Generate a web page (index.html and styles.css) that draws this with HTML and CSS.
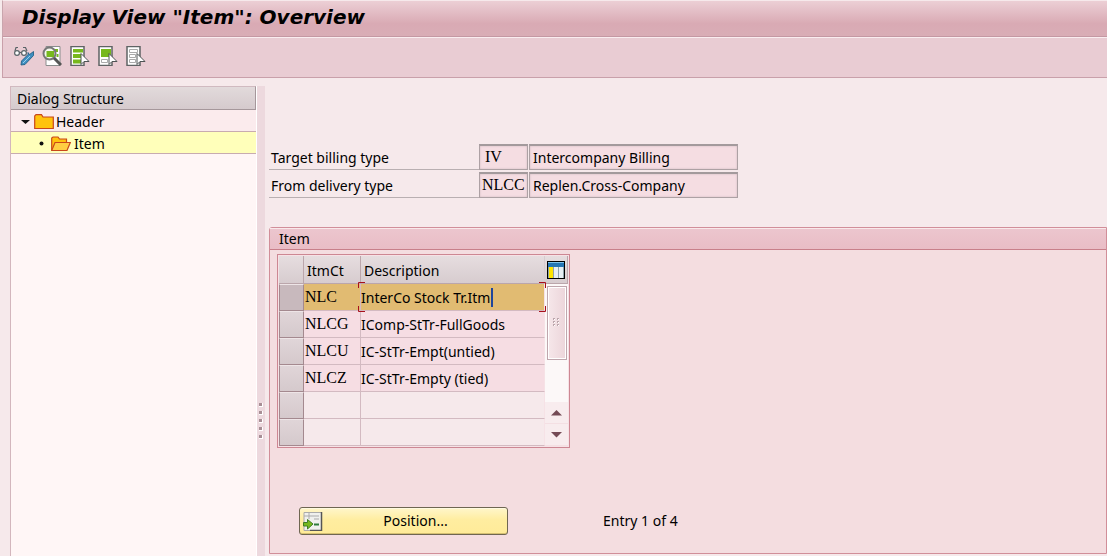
FILE: index.html
```html
<!DOCTYPE html>
<html lang="en">
<head>
<meta charset="utf-8">
<meta name="viewport" content="width=device-width, initial-scale=1">
<title>Display View "Item": Overview</title>
<link rel="stylesheet" href="styles.css">
</head>
<body>
<div class="window">
  <header class="titlebar"><h1 class="title">Display View "Item": Overview</h1></header>
  <nav class="toolbar" aria-label="Application toolbar">
    <button class="tool" type="button" aria-label="Display / change">
      <svg width="20" height="20" viewBox="0 0 20 20"><g fill="#fff" stroke="#5a6468" stroke-width="1.2"><path d="M1 5 2 1.500H4M9 1.500h2.500L13 5" fill="none"/><circle cx="3" cy="7" r="2.400"/><circle cx="10" cy="7" r="2.400"/><path d="M5.500 6.500h2"/></g><path d="M14 6.500l1.500 2 4-3v4l-8.500 9-4 .500.500-4 6.500-6.500z" fill="#3f8fc0" stroke="#17587d" stroke-width=".8"/><path d="M9 17l7-7" stroke="#9bd0ec"/></svg>
    </button>
    <button class="tool" type="button" aria-label="Details">
      <svg width="20" height="20" viewBox="0 0 20 20"><path d="M4 .5h14v19H4z" fill="#fff" stroke="#8a8d8d"/><path d="M13 3h3v3h-3zM14.500 8h2v3h-2z" fill="#77b81d"/><circle cx="7.500" cy="7.500" r="6" fill="#f4f8ee" stroke="#777" stroke-width="2"/><path d="M4.500 5H12v6H4.500z" fill="#77b81d"/><path d="M12 12l7 7" stroke="#555" stroke-width="3"/></svg>
    </button>
    <button class="tool" type="button" aria-label="Select all">
      <svg width="20" height="20" viewBox="0 0 20 20"><path d="M1 .5h13v19H1z" fill="#fff" stroke="#5f6364" stroke-width="1.500"/><path d="M3 3h10v3.500H3zM3 8h9v4H3zM3 13.500h8v4H3z" fill="#77b81d"/><path d="M11 7.500v11l3-3h5z" fill="#fff" stroke="#4f5455"/></svg>
    </button>
    <button class="tool" type="button" aria-label="Select block">
      <svg width="20" height="20" viewBox="0 0 20 20"><path d="M1 .5h13v19H1z" fill="#fff" stroke="#5f6364" stroke-width="1.500"/><path d="M3 3h10v8H3z" fill="#77b81d"/><path d="M3.500 13.500h6v3h-6z" fill="none" stroke="#aaa"/><path d="M11 7.500v11l3-3h5z" fill="#fff" stroke="#4f5455"/></svg>
    </button>
    <button class="tool" type="button" aria-label="Deselect all">
      <svg width="20" height="20" viewBox="0 0 20 20"><path d="M1 .5h13v19H1z" fill="#fff" stroke="#5f6364" stroke-width="1.500"/><path d="M3.500 3.500h8v3h-8zM3.500 8.500h6v3h-6zM3.500 13.500h6v3h-6z" fill="none" stroke="#aaa"/><path d="M11 7.500v11l3-3h5z" fill="#fff" stroke="#4f5455"/></svg>
    </button>
  </nav>
  <main class="workspace">
    <aside class="structure">
      <h2 class="structure-head">Dialog Structure</h2>
      <ul class="tree">
        <li><button class="node" type="button">
          <svg class="twisty" width="9" height="6" viewBox="0 0 9 6"><path d="M0 1h9L4.500 5z" fill="#111"/></svg>
          <svg width="20" height="16" viewBox="0 0 20 16"><path d="M.7 14.500V2L2 .700h5.500L9 3h10.300v11.500z" fill="#ffc30d" stroke="#c9471b" stroke-width="1.200"/></svg>
          Header</button></li>
        <li><button class="node node-child" type="button" aria-current="true">
          <svg class="twisty" width="5" height="6" viewBox="0 0 5 6"><circle cx="2.500" cy="2.500" r="2" fill="#111"/></svg>
          <svg width="20" height="16" viewBox="0 0 20 16"><path d="M.7 14.500V2L2 1h5l1.500 2H15.500v5" fill="#ffc30d" stroke="#c9471b" stroke-width="1.200"/><path d="M.7 14.500L4 6.500h15.300L16 14.500z" fill="#ffce42" stroke="#c9471b" stroke-width="1.200"/></svg>
          Item</button></li>
      </ul>
    </aside>
    <div class="splitter" role="separator" aria-orientation="vertical"><i></i><i></i><i></i><i></i><i></i></div>
    <section class="detail">
      <form class="fields">
        <div class="field"><label class="field-label" for="billing">Target billing type</label><input class="box code" id="billing" value="IV" readonly><input class="box name" aria-label="Billing type name" value="Intercompany Billing" readonly></div>
        <div class="field"><label class="field-label" for="delivery">From delivery type</label><input class="box code full" id="delivery" value="NLCC" readonly><input class="box name" aria-label="Delivery type name" value="Replen.Cross-Company" readonly></div>
      </form>
      <section class="group">
        <h2 class="group-head">Item</h2>
        <div class="group-body">
          <div class="grid">
            <table class="items">
              <colgroup><col class="col-select"><col class="col-code"><col></colgroup>
              <thead><tr><th></th><th>ItmCt</th><th>Description</th></tr></thead>
              <tbody>
                <tr class="active"><th></th><td class="key">NLC</td><td class="focus"><span class="caret">InterCo Stock Tr.Itm</span><svg class="corners" viewBox="0 0 188 30" preserveAspectRatio="none"><path d="M.5 6V.5H7M181 .5h6.500V6M.5 24v5.500H7M181 29.500h6.500V24" fill="none" stroke="#a8101c"/></svg></td></tr>
                <tr><th></th><td class="key">NLCG</td><td>IComp-StTr-FullGoods</td></tr>
                <tr><th></th><td class="key">NLCU</td><td>IC-StTr-Empt(untied)</td></tr>
                <tr><th></th><td class="key">NLCZ</td><td>IC-StTr-Empty (tied)</td></tr>
                <tr class="blank"><th></th><td></td><td></td></tr>
                <tr class="blank"><th></th><td></td><td></td></tr>
              </tbody>
            </table>
            <div class="rail">
              <button class="config" type="button" aria-label="Table settings"><svg width="18" height="18" viewBox="0 0 18 18"><path d="M0 0h18v18H0z" fill="#000"/><path d="M1 1h16v1H1z" fill="#7fc4ec"/><path d="M1 2h16v4H1z" fill="#2476b4"/><path d="M1 6h16v11H1z" fill="#8fa2ab"/><path d="M2 6h4v11H2z" fill="#ffe500"/><path d="M7 6h4v11H7zM12 6h4v11h-4z" fill="#e7eff4"/></svg></button>
              <div class="track"><div class="thumb"><svg width="8" height="10" viewBox="0 0 8 10"><path d="M0 0h2v2H0zM4 0h2v2H4zM0 3h2v2H0zM4 3h2v2H4zM0 6h2v2H0zM4 6h2v2H4z" fill="#bca6ac"/><path d="M1 1h1v1H1zM5 1h1v1H5zM1 4h1v1H1zM5 4h1v1H5zM1 7h1v1H1zM5 7h1v1H5z" fill="#fff"/></svg></div></div>
              <button class="step" type="button" aria-label="Scroll up"><svg width="11" height="6" viewBox="0 0 11 6"><path d="M0 5.500L5.500 0 11 5.500z" fill="#744a55"/></svg></button>
              <button class="step" type="button" aria-label="Scroll down"><svg width="11" height="6" viewBox="0 0 11 6"><path d="M0 0h11L5.500 5.500z" fill="#744a55"/></svg></button>
            </div>
          </div>
          <div class="actions">
            <button class="position" type="button">
              <svg width="20" height="19" viewBox="0 0 20 19"><path d="M1 .5h17.500v18H1z" fill="#f0f0ee" stroke="#aaa"/><path d="M18.500 0v18.500H7" fill="none" stroke="#555" stroke-width="1.500"/><path d="M1 4h15M6 1v6M11 7h5" stroke="#aaa"/><path d="M11 12.500h5" stroke="#2d7a3c" stroke-width="2"/><path d="M.5 10.500h4v-3L10 12l-5.500 5v-3h-4z" fill="#77b81d" stroke="#3f7d24"/></svg>
              <span class="position-text">Position...</span></button>
            <output class="entry">Entry 1 of 4</output>
          </div>
        </div>
      </section>
    </section>
  </main>
</div>
</body>
</html>
```
FILE: styles.css
```css
* { box-sizing: border-box; }
body { margin: 0; background: #f6e9eb; color: #000; font: 14px/20px "Noto Sans", sans-serif; }
button, input { font: inherit; color: inherit; }
button { border: 0; background: none; padding: 0; margin: 0; }
svg { display: block; flex: none; }
h1, h2 { margin: 0; font-weight: 400; }
h2 { font-size: 14px; }

.window { display: flex; flex-direction: column; min-height: 100vh; padding-left: 2px; }
.titlebar { height: 37px; padding: 2px 19px; border-top: 1px solid #f6e9eb; border-bottom: 1px solid #c498a3; border-left: 1px solid #c9a5ad; background: linear-gradient(#eccfd5, #d9aab4 65%, #d9adb6); }
.title { font: italic bold 20px/28px "DejaVu Sans", sans-serif; white-space: nowrap; }
.toolbar { display: flex; align-items: center; gap: 8px; height: 41px; padding: 0 11px 2px; border: 1px solid #c9a0aa; border-width: 0 0 1px 1px; box-shadow: inset 0 1px #faedf0; background: #e9ccd3; }
.tool { width: 20px; height: 20px; }

.workspace { display: flex; flex: 1; padding: 8px 0 0 8px; }
.structure { width: 247px; flex: none; border-left: 1px solid #d3b6bd; border-right: 1px solid #fff; background: #fff6f6; }
.structure-head { height: 24px; padding: 2px 6px 0; border: 1px solid #a5979b; border-left: 0; border-top-color: #d0bac0; background: linear-gradient(#e2dadb, #d5cacd); }
.tree { margin: 0; padding: 0; list-style: none; }
.node { display: flex; align-items: center; gap: 2px; width: 100%; height: 22px; padding: 2px 0 0 10px; border-bottom: 1px solid #c8abb0; background: #fbebed; }
.node-child { gap: 3px; padding-left: 28px; background: #ffffba; }
.twisty { margin-right: 2px; }
.node-child .twisty { margin-right: 4px; }

.splitter { display: flex; flex-direction: column; align-items: center; gap: 4px; width: 8px; flex: none; padding-top: 317px; background: #edd9de; }
.splitter i { width: 4px; height: 4px; background: #a88e95; border: solid #fff; border-width: 0 1px 1px 0; }

.detail { flex: 1; min-width: 0; display: flex; flex-direction: column; padding: 58px 0 2px 4px; }
.fields { display: flex; flex-direction: column; gap: 2px; margin-bottom: 29px; }
.field { display: flex; height: 26px; }
.field-label { width: 210px; padding: 4px 2px 0; border-bottom: 1px solid #b9afb1; }
.box { min-width: 0; border: 1px solid #ada1a4; border-top: 2px solid #a39a9c; border-radius: 0; padding: 0 3px; background: #f5dde2; box-shadow: inset 0 0 2px #c9b4b9; outline: 0; }
.code { width: 49px; padding: 0 5px 1px; margin-right: 1px; font: 16px/20px "Liberation Serif", serif; }
.full { padding: 0 2px 1px; }
.name { width: 209px; }

.group { flex: 1; border: 1px solid #d18e99; border-top-left-radius: 3px; background: #f4dde0; }
.group-head { height: 22px; padding: 1px 9px; border-bottom: 1px solid #c87f8a; box-shadow: inset 0 1px #f9e8ea; background: linear-gradient(#ecc6ce, #e9bdc6); }
.group-body { padding: 4px 7px 0; }
.grid { display: flex; width: 293px; padding: 1px 1px 1px 1px; border: 1px solid #cd8793; background: #f6e2e6; }
.items { flex: 1; border-collapse: separate; border-spacing: 0; table-layout: fixed; }
.items tr { height: 27px; }
.items th, .items td { height: 27px; padding: 1px 0 0; text-align: left; font-weight: 400; white-space: nowrap; border: solid #d3bac1; border-width: 0 1px 1px 0; }
.items td { background: #f6dde3; }
.items tbody th { border: 1px solid #a4898f; border-top-color: #eee5e7; background: linear-gradient(#e0d5d8, #d5c9cc); }
.items thead th { padding: 2px 3px 0; height: 28px; border-color: #bba6ab; background: linear-gradient(#e6dddf, #d7cccf); }
.items thead th:last-child { border-right-color: #d7cccf; }
.items .active th { background: #c8b9bd; }
.items .active td { background: #e1bb72; }
.items td:last-child { border-right-color: transparent; background-clip: padding-box; }
.items .blank td { background-color: #f6e9eb; }
.items .key { padding: 0 1px; font: 16px/20px "Liberation Serif", serif; }
.col-select { width: 25px; }
.col-code { width: 57px; }
.focus { position: relative; }
.corners { position: absolute; left: -3px; top: -2px; width: calc(100% + 5px); height: 30px; }
.caret { border-right: 2px solid #20469b; padding: 0 1px 0 0; }
.rail { display: flex; flex-direction: column; width: 23px; flex: none; }
.config { display: flex; align-items: center; justify-content: center; height: 28px; border: solid #bba6ab; border-width: 0 1px 1px 0; background: linear-gradient(#e6dddf, #d7cccf); }
.track { flex: 1; padding: 2px 1px 2px 2px; background: #fcf8f8; }
.thumb { display: flex; align-items: center; justify-content: center; height: 74px; border: 1px solid #bfa6ad; box-shadow: inset 0 0 0 1px #fff; background: linear-gradient(90deg, #f6e7ea, #ecd5da); }
.step { display: flex; align-items: center; justify-content: center; height: 22px; background: #f8ecee; border-bottom: 1px solid #f4dfe3; }
.actions { display: flex; align-items: center; gap: 95px; padding: 59px 22px 0; }
.position { display: flex; align-items: center; width: 209px; height: 28px; padding: 0 3px; border: 1px solid #6f6652; border-radius: 3px; background: linear-gradient(#fff6cb, #ffeda0 45%, #ffeb99); box-shadow: inset 0 1px #fffae0, inset 0 -1px #d4bf72; }
.position-text { flex: 1; padding-left: 4px; text-align: center; }
```
